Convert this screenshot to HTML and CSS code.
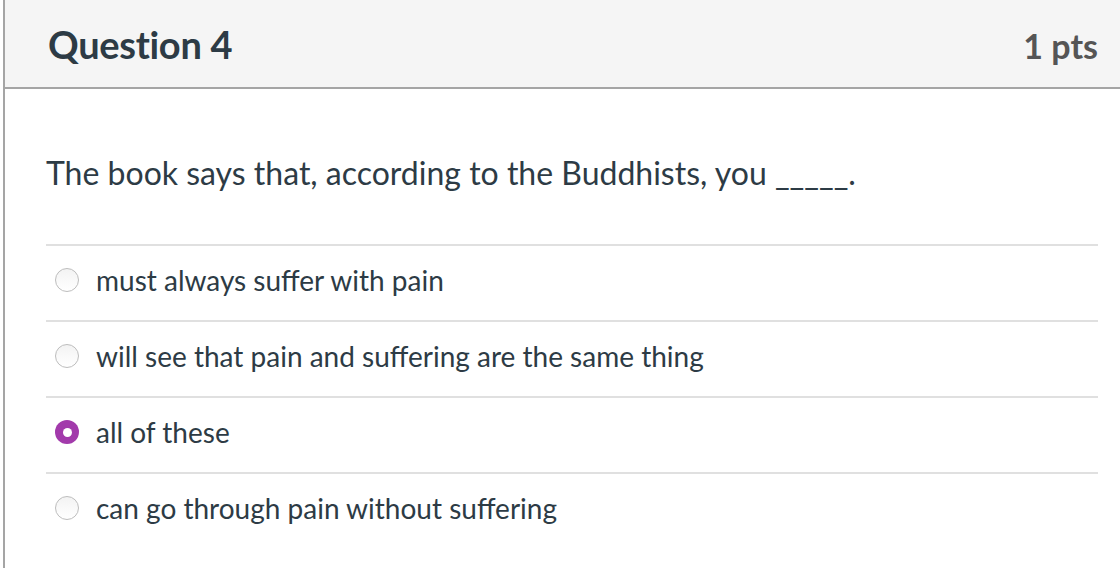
FILE: index.html
```html
<!DOCTYPE html>
<html>
<head>
<meta charset="utf-8">
<link rel="stylesheet" href="styles.css">
</head>
<body>
<div class="question">
  <div class="header">
    <h2 class="title">Question 4</h2>
    <span class="pts">1 pts</span>
  </div>
  <div class="content">
    <p class="prompt">The book says that, according to the Buddhists, you _____.</p>
    <div class="answers">
      <label class="answer"><span class="radio"></span><span class="label">must always suffer with pain</span></label>
      <label class="answer"><span class="radio"></span><span class="label">will see that pain and suffering are the same thing</span></label>
      <label class="answer"><span class="radio checked"></span><span class="label">all of these</span></label>
      <label class="answer"><span class="radio"></span><span class="label">can go through pain without suffering</span></label>
    </div>
  </div>
</div>
</body>
</html>
```

FILE: styles.css
```css
html, body {
  margin: 0;
  padding: 0;
  background: #fff;
  font-family: Lato, "Open Sans", sans-serif;
  color: #2d3b45;
  overflow: hidden;
}
.question {
  margin-left: 3px;
  width: 1140px;
  height: 568px;
  border-left: 2px solid #a5a5a5;
}
.header {
  height: 87px;
  background: #f5f5f5;
  border-bottom: 2px solid #a5a5a5;
  display: flex;
  align-items: center;
  justify-content: space-between;
  padding: 0 43px 0 43px;
  box-sizing: content-box;
  width: 1050px;
}
.title {
  margin: 0;
  font-size: 38px;
  font-weight: 700;
  color: #2d3b45;
  letter-spacing: -0.3px;
}
.pts {
  font-size: 34px;
  font-weight: 700;
  color: #555;
  padding-top: 3px;
}
.content {
  padding: 0 0 0 41px;
  width: 1052px;
}
.prompt {
  margin: 0;
  padding-top: 63px;
  height: 92px;
  font-size: 32px;
  line-height: 42px;
}
.answers {
  border-top: 2px solid #e0e0e0;
}
.answer {
  display: flex;
  align-items: center;
  height: 68px;
  padding-bottom: 6px;
  border-bottom: 2px solid #e0e0e0;
}
.answer:last-child {
  border-bottom: none;
}
.radio {
  width: 24px;
  height: 24px;
  box-sizing: border-box;
  border-radius: 50%;
  border: 1px solid #bdbdbd;
  background: linear-gradient(#f3f3f3, #fff);
  margin-left: 9px;
  margin-right: 17px;
  flex: none;
  display: flex;
  align-items: center;
  justify-content: center;
}
.radio.checked {
  border: none;
  background: #a23aab;
}
.radio.checked::after {
  content: "";
  width: 9px;
  height: 9px;
  border-radius: 50%;
  background: #fff;
}
.label {
  font-size: 28px;
  line-height: 34px;
}
```
